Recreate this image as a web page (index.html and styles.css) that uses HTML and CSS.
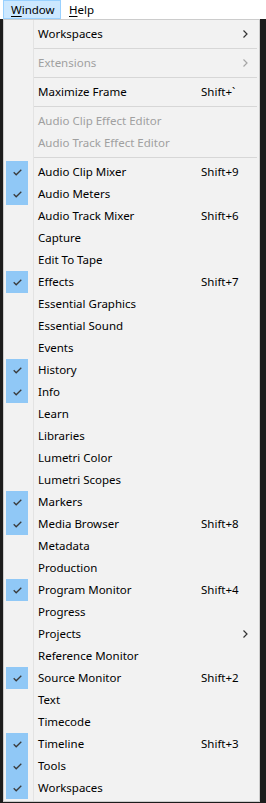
FILE: index.html
```html
<!DOCTYPE html>
<html>
<head>
<meta charset="utf-8">
<link rel="stylesheet" href="styles.css">
</head>
<body>
<div class="menubar">
  <span class="mb-item active"><u>W</u>indow</span>
  <span class="mb-item"><u>H</u>elp</span>
</div>
<div class="menu">
  <div class="item"><span class="chk"></span><span class="lbl">Workspaces</span><span class="sc"></span><span class="arr"><svg width="5" height="8" viewBox="0 0 5 8"><polyline points="0.5,0.5 4,4 0.5,7.5" fill="none" stroke="#333" stroke-width="1.2"/></svg></span></div>
  <div class="sep"></div>
  <div class="item dis"><span class="chk"></span><span class="lbl">Extensions</span><span class="sc"></span><span class="arr"><svg width="5" height="8" viewBox="0 0 5 8"><polyline points="0.5,0.5 4,4 0.5,7.5" fill="none" stroke="#a6a6a6" stroke-width="1.2"/></svg></span></div>
  <div class="sep"></div>
  <div class="item"><span class="chk"></span><span class="lbl">Maximize Frame</span><span class="sc">Shift+`</span></div>
  <div class="sep"></div>
  <div class="item dis"><span class="chk"></span><span class="lbl">Audio Clip Effect Editor</span></div>
  <div class="item dis"><span class="chk"></span><span class="lbl">Audio Track Effect Editor</span></div>
  <div class="sep"></div>
  <div class="item on"><span class="chk"><svg width="9" height="7" viewBox="0 0 9 7"><polyline points="0.7,3.3 3.2,5.8 8.3,0.7" fill="none" stroke="#3a3a3a" stroke-width="1.3"/></svg></span><span class="lbl">Audio Clip Mixer</span><span class="sc">Shift+9</span></div>
  <div class="item on"><span class="chk"><svg width="9" height="7" viewBox="0 0 9 7"><polyline points="0.7,3.3 3.2,5.8 8.3,0.7" fill="none" stroke="#3a3a3a" stroke-width="1.3"/></svg></span><span class="lbl">Audio Meters</span></div>
  <div class="item"><span class="chk"></span><span class="lbl">Audio Track Mixer</span><span class="sc">Shift+6</span></div>
  <div class="item"><span class="chk"></span><span class="lbl">Capture</span></div>
  <div class="item"><span class="chk"></span><span class="lbl">Edit To Tape</span></div>
  <div class="item on"><span class="chk"><svg width="9" height="7" viewBox="0 0 9 7"><polyline points="0.7,3.3 3.2,5.8 8.3,0.7" fill="none" stroke="#3a3a3a" stroke-width="1.3"/></svg></span><span class="lbl">Effects</span><span class="sc">Shift+7</span></div>
  <div class="item"><span class="chk"></span><span class="lbl">Essential Graphics</span></div>
  <div class="item"><span class="chk"></span><span class="lbl">Essential Sound</span></div>
  <div class="item"><span class="chk"></span><span class="lbl">Events</span></div>
  <div class="item on"><span class="chk"><svg width="9" height="7" viewBox="0 0 9 7"><polyline points="0.7,3.3 3.2,5.8 8.3,0.7" fill="none" stroke="#3a3a3a" stroke-width="1.3"/></svg></span><span class="lbl">History</span></div>
  <div class="item on"><span class="chk"><svg width="9" height="7" viewBox="0 0 9 7"><polyline points="0.7,3.3 3.2,5.8 8.3,0.7" fill="none" stroke="#3a3a3a" stroke-width="1.3"/></svg></span><span class="lbl">Info</span></div>
  <div class="item"><span class="chk"></span><span class="lbl">Learn</span></div>
  <div class="item"><span class="chk"></span><span class="lbl">Libraries</span></div>
  <div class="item"><span class="chk"></span><span class="lbl">Lumetri Color</span></div>
  <div class="item"><span class="chk"></span><span class="lbl">Lumetri Scopes</span></div>
  <div class="item on"><span class="chk"><svg width="9" height="7" viewBox="0 0 9 7"><polyline points="0.7,3.3 3.2,5.8 8.3,0.7" fill="none" stroke="#3a3a3a" stroke-width="1.3"/></svg></span><span class="lbl">Markers</span></div>
  <div class="item on"><span class="chk"><svg width="9" height="7" viewBox="0 0 9 7"><polyline points="0.7,3.3 3.2,5.8 8.3,0.7" fill="none" stroke="#3a3a3a" stroke-width="1.3"/></svg></span><span class="lbl">Media Browser</span><span class="sc">Shift+8</span></div>
  <div class="item"><span class="chk"></span><span class="lbl">Metadata</span></div>
  <div class="item"><span class="chk"></span><span class="lbl">Production</span></div>
  <div class="item on"><span class="chk"><svg width="9" height="7" viewBox="0 0 9 7"><polyline points="0.7,3.3 3.2,5.8 8.3,0.7" fill="none" stroke="#3a3a3a" stroke-width="1.3"/></svg></span><span class="lbl">Program Monitor</span><span class="sc">Shift+4</span></div>
  <div class="item"><span class="chk"></span><span class="lbl">Progress</span></div>
  <div class="item"><span class="chk"></span><span class="lbl">Projects</span><span class="sc"></span><span class="arr"><svg width="5" height="8" viewBox="0 0 5 8"><polyline points="0.5,0.5 4,4 0.5,7.5" fill="none" stroke="#333" stroke-width="1.2"/></svg></span></div>
  <div class="item"><span class="chk"></span><span class="lbl">Reference Monitor</span></div>
  <div class="item on"><span class="chk"><svg width="9" height="7" viewBox="0 0 9 7"><polyline points="0.7,3.3 3.2,5.8 8.3,0.7" fill="none" stroke="#3a3a3a" stroke-width="1.3"/></svg></span><span class="lbl">Source Monitor</span><span class="sc">Shift+2</span></div>
  <div class="item"><span class="chk"></span><span class="lbl">Text</span></div>
  <div class="item"><span class="chk"></span><span class="lbl">Timecode</span></div>
  <div class="item on"><span class="chk"><svg width="9" height="7" viewBox="0 0 9 7"><polyline points="0.7,3.3 3.2,5.8 8.3,0.7" fill="none" stroke="#3a3a3a" stroke-width="1.3"/></svg></span><span class="lbl">Timeline</span><span class="sc">Shift+3</span></div>
  <div class="item on"><span class="chk"><svg width="9" height="7" viewBox="0 0 9 7"><polyline points="0.7,3.3 3.2,5.8 8.3,0.7" fill="none" stroke="#3a3a3a" stroke-width="1.3"/></svg></span><span class="lbl">Tools</span></div>
  <div class="item on"><span class="chk"><svg width="9" height="7" viewBox="0 0 9 7"><polyline points="0.7,3.3 3.2,5.8 8.3,0.7" fill="none" stroke="#3a3a3a" stroke-width="1.3"/></svg></span><span class="lbl">Workspaces</span></div>
</div>
</body>
</html>
```

FILE: styles.css
```css
html, body {
  margin: 0;
  padding: 0;
}
body {
  background: #1c1c1c;
  font-family: "Noto Sans", "Open Sans", sans-serif;
  font-size: 11.5px;
  color: #000;
  width: 266px;
  height: 803px;
  overflow: hidden;
}
.menubar {
  height: 19px;
  background: #ffffff;
  display: flex;
  align-items: stretch;
  padding-left: 3px;
}
.mb-item {
  display: flex;
  align-items: center;
  padding: 0 7px;
  border: 1px solid transparent;
  box-sizing: border-box;
  height: 19px;
  line-height: 1;
}
.mb-item u {
  text-decoration-thickness: 1px;
  text-underline-offset: 2px;
}
.mb-item.active {
  background: #cce8ff;
  border-color: #99d1ff;
  width: 58px;
}
.menu {
  margin-left: 3px;
  width: 257px;
  box-sizing: border-box;
  background: #f2f2f2;
  border: 1px solid #cccccc;
  padding: 3px 0 2px;
  position: relative;
}
.menu::before {
  content: "";
  position: absolute;
  left: 29px;
  top: 0;
  bottom: 0;
  width: 1px;
  background: #e3e3e3;
}
.item {
  display: grid;
  grid-template-columns: 34px 163px 1fr;
  height: 22px;
  align-items: center;
  white-space: nowrap;
}
.chk {
  margin-left: 2px;
  width: 22px;
  height: 22px;
  display: flex;
  align-items: center;
  justify-content: center;
  position: relative;
  z-index: 1;
}
.item.on .chk {
  background: #90c8f6;
}
.lbl {
  line-height: 22px;
}
.sc {
  line-height: 22px;
}
.arr {
  grid-column: 3;
  grid-row: 1;
  justify-self: end;
  padding-right: 11px;
  display: flex;
  align-items: center;
}
.dis {
  color: #a0a0a0;
}
.sep {
  height: 1px;
  margin: 3px 2px 3px 30px;
  background: #d7d7d7;
}
```
